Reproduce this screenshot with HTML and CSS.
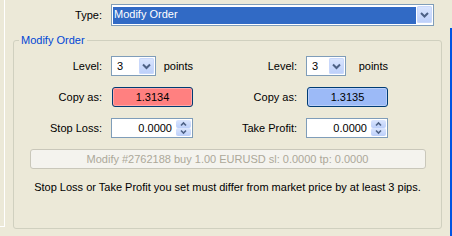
FILE: index.html
```html
<!DOCTYPE html>
<html lang="en">
<head>
    <meta charset="UTF-8">
    <title>Order</title>
    <link rel="stylesheet" href="styles.css">
</head>
<body>
    <div class="dialog">
        <div class="edge-left"></div>
        <div class="content">
            <div class="type-row">
                <span class="label">Type:</span>
                <div class="select">
                    <span class="select-value">Modify Order</span>
                    <span class="drop-btn">
                        <svg width="15" height="17" viewBox="0 0 15 17"><path d="M4 7 L7.5 10.5 L11 7" fill="none" stroke="#4D6185" stroke-width="2"/></svg>
                    </span>
                </div>
            </div>
            <fieldset class="group">
                <legend>Modify Order</legend>
                <div class="fields">
                    <span class="label">Level:</span>
                    <div class="level">
                        <div class="combo">
                            <span class="combo-value">3</span>
                            <span class="drop-btn small">
                                <svg width="15" height="16" viewBox="0 0 15 16"><path d="M4 6.5 L7.5 10 L11 6.5" fill="none" stroke="#4D6185" stroke-width="2"/></svg>
                            </span>
                        </div>
                        <span>points</span>
                    </div>
                    <span class="label">Level:</span>
                    <div class="level level-right">
                        <div class="combo">
                            <span class="combo-value">3</span>
                            <span class="drop-btn small">
                                <svg width="15" height="16" viewBox="0 0 15 16"><path d="M4 6.5 L7.5 10 L11 6.5" fill="none" stroke="#4D6185" stroke-width="2"/></svg>
                            </span>
                        </div>
                        <span>points</span>
                    </div>

                    <span class="label">Copy as:</span>
                    <div class="copy copy-sell">1.3134</div>
                    <span class="label">Copy as:</span>
                    <div class="copy copy-buy">1.3135</div>

                    <span class="label">Stop Loss:</span>
                    <div class="spin">
                        <span class="spin-value">0.0000</span>
                        <span class="spin-btns">
                            <span class="spin-btn"><svg width="15" height="8" viewBox="0 0 15 8"><path d="M5 5.5 L7.5 3 L10 5.5" fill="none" stroke="#4D6185" stroke-width="1.6"/></svg></span>
                            <span class="spin-btn"><svg width="15" height="8" viewBox="0 0 15 8"><path d="M5 2.5 L7.5 5 L10 2.5" fill="none" stroke="#4D6185" stroke-width="1.6"/></svg></span>
                        </span>
                    </div>
                    <span class="label">Take Profit:</span>
                    <div class="spin">
                        <span class="spin-value">0.0000</span>
                        <span class="spin-btns">
                            <span class="spin-btn"><svg width="15" height="8" viewBox="0 0 15 8"><path d="M5 5.5 L7.5 3 L10 5.5" fill="none" stroke="#4D6185" stroke-width="1.6"/></svg></span>
                            <span class="spin-btn"><svg width="15" height="8" viewBox="0 0 15 8"><path d="M5 2.5 L7.5 5 L10 2.5" fill="none" stroke="#4D6185" stroke-width="1.6"/></svg></span>
                        </span>
                    </div>
                </div>
                <div class="modify-btn">Modify #2762188 buy 1.00 EURUSD sl: 0.0000 tp: 0.0000</div>
                <p class="note">Stop Loss or Take Profit you set must differ from market price by at least 3 pips.</p>
            </fieldset>
        </div>
        <div class="edge-right"></div>
    </div>
</body>
</html>
```

FILE: styles.css
```css
body {
    margin: 0;
    background-color: #ece9d8;
    font-family: "Liberation Sans", Arial, sans-serif;
    font-size: 11px;
    color: #000;
}
.dialog {
    display: flex;
    width: 452px;
    height: 236px;
}
.edge-left {
    flex: none;
    width: 4px;
    height: 226px;
    border-right: 1px solid #fff;
    border-bottom: 1px solid #fff;
}
.content {
    flex: 1;
    padding-top: 4px;
}
.edge-right {
    flex: none;
    width: 2px;
    margin-top: 28px;
    background-color: #0054e3;
}
.label {
    text-align: right;
    white-space: nowrap;
}
.type-row {
    display: flex;
    align-items: center;
    gap: 9px;
}
.type-row .label {
    width: 97px;
}
.select {
    display: flex;
    width: 321px;
    height: 19px;
    padding-top: 1px;
    box-sizing: content-box;
    border: 1px solid #7f9db9;
    background-color: #fff;
}
.select-value {
    flex: 1;
    margin: 1px 1px 1px 1px;
    padding-left: 1px;
    background-color: #316ac5;
    color: #fff;
    line-height: 15px;
}
.drop-btn {
    display: block;
    width: 15px;
    height: 17px;
    margin-right: 1px;
    border-radius: 2px;
    background: linear-gradient(#dbe6fe, #bccffa);
    box-shadow: inset 0 0 0 1px #c9d8fb;
}
.drop-btn svg {
    display: block;
}
.drop-btn.small {
    height: 16px;
    margin: 1px 1px 0 0;
}
.group {
    margin: 8px 8px 0 8px;
    padding: 0;
    height: 193px;
    border: 1px solid #d0d0bf;
    border-radius: 3px;
}
.group legend {
    margin-left: 5px;
    padding: 0 2px;
    color: #0046d5;
    line-height: 13px;
}
.fields {
    display: grid;
    grid-template-columns: 88px 82px 95px 82px;
    grid-template-rows: 20px 20px 20px;
    column-gap: 9px;
    row-gap: 11px;
    align-items: center;
    margin-top: 9px;
}
.level {
    display: flex;
    align-items: center;
    gap: 8px;
    white-space: nowrap;
}
.level-right {
    gap: 13px;
}
.combo {
    display: flex;
    width: 50px;
    height: 18px;
    border: 1px solid #7f9db9;
    background-color: #fff;
}
.combo-value {
    flex: 1;
    padding-left: 5px;
    line-height: 18px;
}
.copy {
    width: 79px;
    height: 18px;
    margin-left: 1px;
    border: 1px solid #003c74;
    border-radius: 3px;
    box-shadow: inset 0 0 0 1px rgba(255, 255, 255, 0.3);
    text-align: center;
    line-height: 18px;
}
.copy-sell {
    background-color: #ff8080;
}
.copy-buy {
    background-color: #9cbaf7;
}
.spin {
    display: flex;
    width: 80px;
    height: 18px;
    border: 1px solid #7f9db9;
    background-color: #fff;
}
.spin-value {
    flex: 1;
    padding-right: 4px;
    text-align: right;
    line-height: 18px;
}
.spin-btns {
    display: flex;
    flex-direction: column;
    width: 15px;
    margin: 1px 1px 1px 0;
}
.spin-btn {
    display: block;
    height: 8px;
    border-radius: 2px;
    background: linear-gradient(#dbe6fe, #bccffa);
}
.spin-btn svg {
    display: block;
}
.modify-btn {
    width: 394px;
    height: 18px;
    margin: 11px auto 0;
    border: 1px solid #c9c7ba;
    border-radius: 3px;
    background-color: #f4f3ee;
    color: #aca899;
    text-align: center;
    line-height: 18px;
}
.note {
    margin: 12px 0 0;
    text-align: center;
    line-height: 13px;
}
```
